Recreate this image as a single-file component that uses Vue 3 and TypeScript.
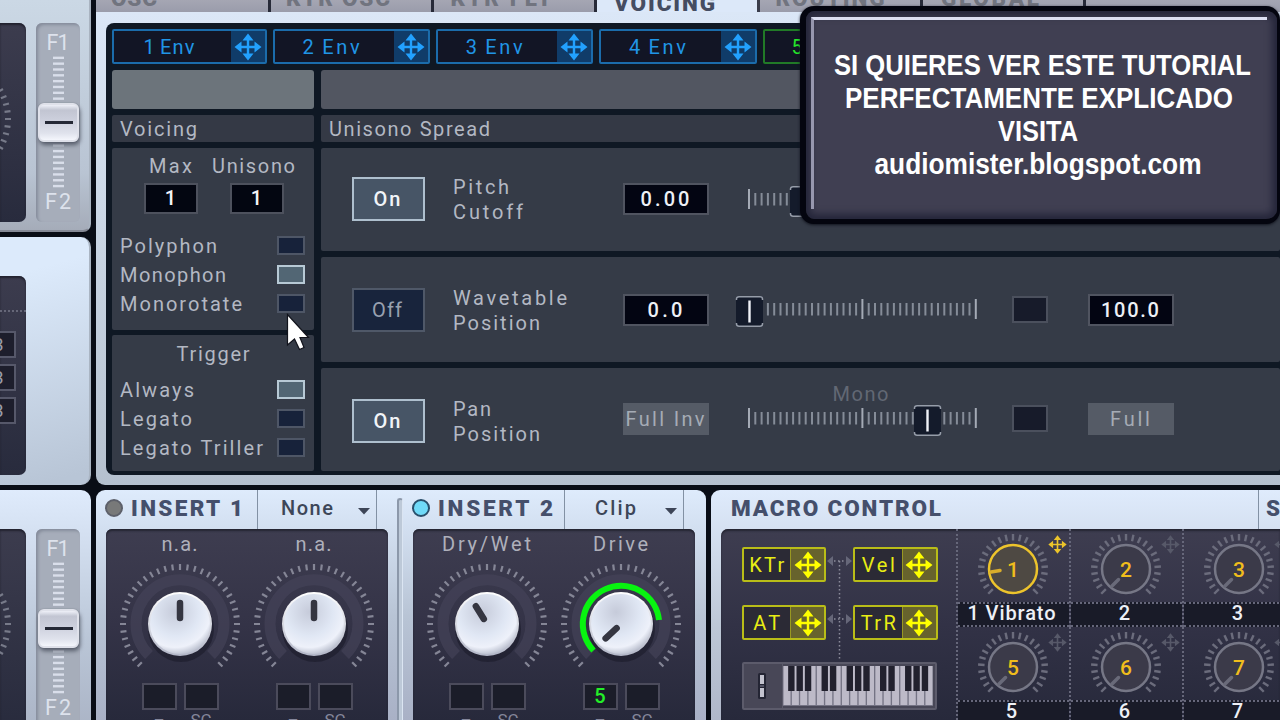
<script setup lang="ts">
type FitEl = HTMLElement

// Spaces the letters of a label so that it spans the given width in pixels.
const vFit = {
  mounted(el: FitEl, binding: { value: number }) {
    const count = (el.textContent ?? '').trim().length
    if (count < 2) return
    const spacing = (binding.value - el.getBoundingClientRect().width) / (count - 1)
    el.style.letterSpacing = `${spacing}px`
    el.style.marginRight = `${-spacing}px`
  },
}

interface Tick { x1: number; y1: number; x2: number; y2: number }

function ring(count: number, inner: number, outer: number): Tick[] {
  return Array.from({ length: count }, (_, i) => {
    const a = ((-135 + (270 * i) / (count - 1)) * Math.PI) / 180
    const s = Math.sin(a)
    const c = -Math.cos(a)
    return { x1: s * inner, y1: c * inner, x2: s * outer, y2: c * outer }
  })
}

const knobTicks = ring(37, 54, 60)
const macroTicks = ring(23, 28.5, 35)

const tabs = [
  { name: 'OSC', width: 46, cls: 'first' },
  { name: 'KTR OSC', width: 104, cls: '' },
  { name: 'KTR FLT', width: 101, cls: '' },
  { name: 'VOICING', width: 101, cls: 'active' },
  { name: 'ROUTING', width: 109, cls: 'late' },
  { name: 'GLOBAL', width: 98, cls: '' },
]

const envs = [
  { n: '1', w: 51, cls: 'first' },
  { n: '2', w: 57, cls: '' },
  { n: '3', w: 57, cls: '' },
  { n: '4', w: 57, cls: '' },
]

const modes = [
  { name: 'Polyphon', w: 97, on: false },
  { name: 'Monophon', w: 106, on: true },
  { name: 'Monorotate', w: 122, on: false },
]
const triggers = [
  { name: 'Always', w: 74, on: true },
  { name: 'Legato', w: 72, on: false },
  { name: 'Legato Triller', w: 143, on: false },
]

const rows = [
  { on: true, a: 'Pitch', aw: 56, b: 'Cutoff', bw: 70, value: '0.00', vw: 49, thumb: 54, muted: false, note: '', end: '', ew: 47 },
  { on: false, a: 'Wavetable', aw: 114, b: 'Position', bw: 87, value: '0.0', vw: 35, thumb: 0, muted: false, note: '', end: '100.0', ew: 58 },
  { on: true, a: 'Pan', aw: 38, b: 'Position', bw: 87, value: 'Full Inv', vw: 79, thumb: 178, muted: true, note: 'Mono', end: 'Full', ew: 40 },
]

const sliderTicks = Array.from({ length: 37 }, (_, i) => ({ x: 13 + i * 6.3, big: i % 18 === 0 }))

const inserts = [
  {
    title: 'INSERT 1', active: false, type: 'None', tw: 52,
    knobs: [
      { label: 'n.a.', w: 36, angle: 0, arc: false, slot: '' },
      { label: 'n.a.', w: 36, angle: 0, arc: false, slot: '' },
    ],
  },
  {
    title: 'INSERT 2', active: true, type: 'Clip', tw: 41,
    knobs: [
      { label: 'Dry/Wet', w: 89, angle: -32, arc: false, slot: '' },
      { label: 'Drive', w: 55, angle: -133, arc: true, slot: '5' },
    ],
  },
]

const sources = [
  [{ t: 'KTr', w: 35 }, { t: 'Vel', w: 33 }],
  [{ t: 'AT', w: 27 }, { t: 'TrR', w: 35 }],
]

const whiteKeys = Array.from({ length: 18 }, (_, i) => i * 8.35)
const blackKeys = [1, 2, 3, 5, 6, 8, 9, 10, 12, 13, 15, 16, 17].map((k) => k * 8.35 - 3.2)

const macros = [
  { n: '1', name: '1 Vibrato', on: true },
  { n: '2', name: '2', on: false },
  { n: '3', name: '3', on: false },
  { n: '5', name: '5', on: false },
  { n: '6', name: '6', on: false },
  { n: '7', name: '7', on: false },
]

const message = [
  { t: 'SI QUIERES VER ESTE TUTORIAL', w: 417, x: 228.5 },
  { t: 'PERFECTAMENTE EXPLICADO', w: 388, x: 225 },
  { t: 'VISITA', w: 80, x: 224 },
  { t: 'audiomister.blogspot.com', w: 327, x: 224 },
]
</script>

<template>
  <div class="synth">
    <svg class="defs" width="0" height="0">
      <defs>
        <symbol id="move" viewBox="0 0 28 28">
          <path d="M14 4V24M4 14H24" stroke="currentColor" stroke-width="2.4" />
          <path d="M14 0.5L19.5 7.5H8.5ZM14 27.5L19.5 20.5H8.5ZM0.5 14L7.5 8.5V19.5ZM27.5 14L20.5 8.5V19.5Z" fill="currentColor" />
        </symbol>
        <radialGradient id="cap" cx="0.42" cy="0.3" r="0.72">
          <stop offset="0" stop-color="#c6cbda" />
          <stop offset="0.55" stop-color="#e0e7f4" />
          <stop offset="0.82" stop-color="#eef1fa" />
          <stop offset="1" stop-color="#babfce" />
        </radialGradient>
        <linearGradient id="rim" x1="0" y1="0" x2="0" y2="1">
          <stop offset="0" stop-color="#ffffff" />
          <stop offset="1" stop-color="#b2b6c7" />
        </linearGradient>
      </defs>
    </svg>

    <div class="side">
      <section v-for="p in [0, 1, 2]" :key="p" class="side-panel" :class="'sp' + p">
        <div class="side-screen">
          <svg v-if="p !== 1" class="side-knob" width="26" height="130" viewBox="49 -65 26 130">
            <line v-for="(t, i) in knobTicks" :key="i" v-bind="t" stroke="#777a89" stroke-width="2.2" />
          </svg>
          <div v-else class="side-slots">
            <div v-for="n in 3" :key="n" class="side-slot"><span>3</span></div>
          </div>
        </div>
        <div v-if="p !== 1" class="fader">
          <span v-fit="23">F1</span>
          <svg width="44" height="138" viewBox="0 0 44 138">
            <path v-for="i in 23" :key="i" :d="`M17 ${i * 5.83 - 1}H28`" stroke="#d9deea" stroke-width="2.4" />
          </svg>
          <span v-fit="26">F2</span>
          <div class="fader-cap"><i></i></div>
        </div>
      </section>
    </div>

    <main class="body">
      <section class="voicing">
        <nav class="tabs">
          <div v-for="t in tabs" :key="t.name" class="tab" :class="t.cls">
            <span v-fit="t.width">{{ t.name }}</span>
          </div>
          <div class="tab rest"></div>
        </nav>
        <div class="screen">
          <div class="envs">
            <div v-for="e in envs" :key="e.n" class="env" :class="e.cls">
              <div class="env-name"><span v-fit="e.w">{{ e.n }} Env</span></div>
              <div class="env-move"><svg width="28" height="28"><use href="#move" /></svg></div>
            </div>
            <div class="env green"><span>5</span></div>
          </div>
          <div class="columns">
            <div class="left">
              <div class="band light"></div>
              <div class="caption"><span v-fit="77">Voicing</span></div>
              <div class="cell voices">
                <div class="nums">
                  <div class="num"><span v-fit="43">Max</span><b>1</b></div>
                  <div class="num"><span v-fit="83">Unisono</span><b>1</b></div>
                </div>
                <div v-for="m in modes" :key="m.name" class="option">
                  <span v-fit="m.w">{{ m.name }}</span><i :class="{ on: m.on }"></i>
                </div>
              </div>
              <div class="cell trigger">
                <div class="head"><span v-fit="73">Trigger</span></div>
                <div v-for="m in triggers" :key="m.name" class="option">
                  <span v-fit="m.w">{{ m.name }}</span><i :class="{ on: m.on }"></i>
                </div>
              </div>
            </div>
            <div class="right">
              <div class="band"></div>
              <div class="caption"><span v-fit="161">Unisono Spread</span></div>
              <div v-for="(r, i) in rows" :key="i" class="cell spread">
                <div class="toggle" :class="{ on: r.on }"><span v-fit="r.on ? 27 : 30">{{ r.on ? 'On' : 'Off' }}</span></div>
                <div class="names">
                  <div><span v-fit="r.aw">{{ r.a }}</span></div>
                  <div><span v-fit="r.bw">{{ r.b }}</span></div>
                </div>
                <div class="value" :class="{ muted: r.muted }"><span v-fit="r.vw">{{ r.value }}</span></div>
                <svg class="slider" width="256" height="58" viewBox="0 0 256 58">
                  <text v-if="r.note" x="124.500" y="11" text-anchor="middle" class="note" textLength="56">{{ r.note }}</text>
                  <path v-for="(t, k) in sliderTicks" :key="k" :d="t.big ? `M${t.x} 18V38` : `M${t.x} 22V34.500`"
                    :stroke="t.big ? '#a4aab5' : '#858c98'" stroke-width="2" />
                  <g :transform="`translate(${r.thumb} 15)`">
                    <rect x="0" y="0" width="27" height="31" rx="3" fill="#141b2b" />
                    <path d="M0.500 4V3Q0.500 0.800 3 0.800H24Q26.500 0.800 26.500 3V4M0.500 27V28Q0.500 30.200 3 30.200H24Q26.500 30.200 26.500 28V27" fill="none" stroke="#969da9" stroke-width="1.500" />
                    <path d="M13.500 4.500V26.500" stroke="#f0f2f8" stroke-width="2.400" />
                  </g>
                </svg>
                <template v-if="r.end">
                  <div class="slot"></div>
                  <div class="value" :class="{ muted: r.muted }"><span v-fit="r.ew">{{ r.end }}</span></div>
                </template>
              </div>
            </div>
          </div>
        </div>
      </section>

      <div class="lower">
        <section class="inserts">
          <template v-for="(ins, k) in inserts" :key="ins.title">
            <div v-if="k" class="groove"></div>
            <div class="insert">
              <header>
                <i class="lamp" :class="{ on: ins.active }"></i>
                <h2><span v-fit="k ? 115 : 112">{{ ins.title }}</span></h2>
                <div class="picker">
                  <span v-fit="ins.tw">{{ ins.type }}</span>
                  <svg width="12" height="8" viewBox="0 0 12 8"><path d="M0 1H12L6 7.500Z" fill="#3d4557" /></svg>
                </div>
              </header>
              <div class="knobs">
                <div v-for="(n, j) in ins.knobs" :key="j" class="knob">
                  <div class="knob-label"><span v-fit="n.w">{{ n.label }}</span></div>
                  <svg width="134" height="126" viewBox="-67 -63 134 126">
                    <path d="M-31 31A44 44 0 1 1 31 31" fill="none" stroke="#454459" stroke-opacity="0.65" stroke-width="11" />
                    <line v-for="(t, i) in knobTicks" :key="i" v-bind="t" stroke="#858696" stroke-width="2.200" />
                    <ellipse cx="1" cy="5" rx="33" ry="33" fill="#1b1b29" opacity="0.6" />
                    <path v-if="n.arc" d="M-27.500 26.500A38.200 38.200 0 1 1 38 -4" fill="none" stroke="#08f410" stroke-width="6" />
                    <circle r="32" fill="url(#rim)" />
                    <circle r="30" fill="url(#cap)" />
                    <path d="M0 -6V-21" :transform="`rotate(${n.angle})`" stroke="#353641" stroke-width="6.500" stroke-linecap="round" />
                  </svg>
                  <div class="slots"><div>{{ n.slot }}</div><div></div></div>
                  <div class="slot-names"><span>–</span><span>SC</span></div>
                </div>
              </div>
            </div>
          </template>
        </section>

        <section class="macro">
          <header>
            <h2><span v-fit="210">MACRO CONTROL</span></h2>
            <div class="next"><h2>S</h2></div>
          </header>
          <div class="macro-screen">
            <div class="sources">
              <div v-for="(pair, i) in sources" :key="i" class="pair">
                <template v-for="(s, j) in pair" :key="s.t">
                  <svg v-if="j" width="27" height="64" viewBox="0 0 27 64">
                    <path d="M1 14L7 9V19ZM26 14L20 9V19Z" fill="#666779" />
                    <path d="M8 14H20" stroke="#8c8c9b" stroke-width="1.500" stroke-dasharray="1.500 2.500" />
                    <path :d="i ? 'M13.500 0V56' : 'M13.500 14V58'" stroke="#8c8c9b" stroke-width="1.500" stroke-dasharray="1.500 2.500" />
                  </svg>
                  <div class="source">
                    <div><span v-fit="s.w">{{ s.t }}</span></div>
                    <div class="source-move"><svg width="28" height="28"><use href="#move" /></svg></div>
                  </div>
                </template>
              </div>
              <div class="keyboard">
                <div class="wheel"><svg width="8" height="26" viewBox="0 0 8 26"><rect x="0" y="0" width="8" height="26" rx="1.500" fill="#242534" /><path d="M2 2H6V11H2ZM2 15H6V24H2Z" fill="#c3c3cf" /><path d="M2 13H6" stroke="#85869a" /></svg></div>
                <svg width="150" height="40" viewBox="0 0 150 40">
                  <rect width="150" height="40" fill="#747384" />
                  <rect v-for="x in whiteKeys" :key="x" :x="x + 0.500" y="0" width="7" height="39" fill="#bdbac8" />
                  <rect v-for="x in blackKeys" :key="x" :x="x" y="0" width="6.400" height="25" fill="#22212e" />
                </svg>
              </div>
            </div>
            <div class="macros">
              <div v-for="m in macros" :key="m.n" class="mac" :class="{ on: m.on }">
                <svg width="111" height="73" viewBox="-55 -40 111 73">
                  <line v-for="(t, i) in macroTicks" :key="i" v-bind="t" stroke="#6b6c7c" stroke-width="2.400" />
                  <circle class="dial" r="24" />
                  <path class="hand" :d="m.on ? 'M-22 3L-13 1.500' : 'M-14 17L-7.500 10.500'" />
                  <use class="mv" href="#move" x="35" y="-34" width="19" height="19" />
                  <text class="macn" x="0" y="7.500" text-anchor="middle">{{ m.n }}</text>
                </svg>
                <div class="mac-name"><span v-fit="88">{{ m.name }}</span></div>
              </div>
            </div>
          </div>
        </section>
      </div>
    </main>

    <aside class="banner">
      <svg viewBox="0 0 453 189">
        <text v-for="(l, i) in message" :key="l.t" :x="l.x" :y="54.500 + i * 33.1" text-anchor="middle" :textLength="l.w"
          lengthAdjust="spacingAndGlyphs">{{ l.t }}</text>
      </svg>
    </aside>

    <svg class="cursor" width="26" height="40" viewBox="0 0 26 40">
      <path d="M1.500 1.500V32L8.500 26L13.500 36.500L18 34.500L14 24.500H22.500Z" fill="#fff" stroke="#11131c" stroke-width="1.200" />
    </svg>
  </div>
</template>

<style>
body { overflow: hidden; background: #090d16; }
</style>

<style scoped>
* { box-sizing: border-box; }
.synth {
  position: relative; width: 1280px; height: 720px; overflow: hidden; display: grid;
  grid-template-columns: 91px 1184px; column-gap: 5px; background: #090d16;
  font-family: Roboto, "Liberation Sans", sans-serif; font-size: 20px; color: #b3b8c3;
}
.defs { position: absolute; }
span { display: inline-block; white-space: nowrap; }
h2 { margin: 0; font-size: 22.500px; font-weight: 900; color: #454f6b; line-height: 24px; }

/* left strip */
.side { height: 720px; overflow: hidden; display: flex; flex-direction: column; gap: 5px; }
.side-panel { flex: none; display: flex; gap: 10px; border-radius: 0 10px 10px 0; background: linear-gradient(#cbd8e5, #b9c4d3 75%, #a5acb9); }
.sp0 { height: 232px; padding-top: 23px; border-radius: 0 0 8px 0; border-bottom: 2px solid #858995; border-right: 2px solid #a9b3c0; }
.sp1 { height: 248px; padding-top: 39px; background: linear-gradient(165deg, #dceafb 15%, #b8c5d6 95%); border-right: 2px solid #aab5c3; }
.sp2 { height: 248px; padding-top: 39px; background: linear-gradient(#dfebfc, #bac6d7 60%, #a9b2c4); }
.side-screen { width: 26px; height: 199px; background: linear-gradient(#3c3c4e, #282b3d); border-radius: 0 7px 7px 0; overflow: hidden; display: flex; align-items: center; box-shadow: inset 0 2px 2px #22222f; }
.sp2 .side-screen { align-items: flex-start; padding-top: 30px; }
.side-knob { margin-top: -8px; }
.sp2 .side-knob { margin-top: 0; }
.side-slots { align-self: stretch; width: 26px; padding-top: 34px; display: flex; flex-direction: column; gap: 6px; }
.side-slots::before { content: ""; border-top: 2px dotted #666778; height: 13px; }
.side-slot { width: 16px; height: 27px; border: 2px solid #56586a; border-left: 0; background: #1d1e2c; overflow: hidden; color: #9a9da9; font-size: 19px; line-height: 23px; }
.side-slot span { margin-left: -7px; }
.fader { position: relative; width: 44px; height: 199px; border-radius: 6px; background: #a6adba; box-shadow: inset 2px 2px 3px #868d9c; display: flex; flex-direction: column; align-items: center; color: #dde2ec; }
.fader > span { flex: none; font-size: 21.500px; line-height: 30px; height: 30px; padding-top: 5px; }
.fader > svg { flex: none; display: block; }
.fader > span:nth-of-type(2) { margin-top: -9px; }
.fader-cap { position: absolute; left: 2px; top: 80px; width: 41px; height: 39px; border-radius: 6px; background: linear-gradient(#eef0f8, #c2c5d2 15%, #cdd0dd 45%, #dfe2ec 80%, #f4f6fc); border: 2px solid #dfe1ea; box-shadow: 1px 3px 4px #565c6a, 0 0 1px #686e7b; display: grid; place-items: center; }
.fader-cap i { width: 28px; height: 3px; background: #252936; }

/* main area */
.body { display: flex; flex-direction: column; gap: 5px; width: 1184px; height: 720px; }
.voicing { height: 485px; background: linear-gradient(#dce8f8, #b9c5d3 90%, #b4c0cf); border-radius: 0 0 0 9px; }
.tabs { display: flex; height: 12px; background: #dde9f9; }
.tab { flex: none; width: 163px; height: 12px; overflow: hidden; background: linear-gradient(#a5a6b3, #9a9cab); border-right: 3px solid #272a38; display: flex; align-items: flex-end; justify-content: center; font-size: 22.500px; font-weight: 900; line-height: 16px; color: #71747f; padding: 0 26px 6px 0; }
.tab.first { width: 175px; justify-content: flex-start; padding-left: 15px; }
.tab.late { padding-right: 20px; }
.tab.active { background: #dce8f9; color: #454d62; padding: 0 25px 1px 0; border-right-color: #3a3d4b; }
.tab.rest { flex: 1; border-right: 0; }
.screen { margin: 11px 0 0 10px; height: 452px; padding: 6px 0 0 6px; background: #0f1824; border-radius: 8px 0 0 8px; overflow: hidden; }
.envs { display: flex; gap: 6px; height: 35px; }
.env { flex: none; width: 157.200px; height: 35px; border: 2px solid #1b6cab; border-radius: 2px; background: #121525; color: #2095e6; display: flex; align-items: stretch; word-spacing: -2px; }
.env.first { width: 155px; }
.env-name { flex: 1; display: grid; place-items: center; padding-right: 7px; }
.env-move { width: 34px; background: #103c69; color: #22a1ff; display: grid; place-items: center; }
.env-move svg { display: block; }
.env.green { border-color: #217a27; color: #25e52a; padding-left: 27px; align-items: center; }
.columns { display: flex; gap: 7px; margin-top: 6px; }
.left { width: 202px; }
.right { flex: 1; }
.band { height: 39px; border-radius: 3px; background: #525661; }
.band.light { background: #6c747b; }
.caption { height: 27px; margin: 6px 0; padding-left: 8px; border-radius: 2px; background: #343945; display: flex; align-items: center; }
.cell { background: #353b47; border-radius: 2px; }
.voices { height: 182px; padding-top: 5px; }
.nums { display: grid; grid-template-columns: 54px 82px; gap: 17px; padding-left: 31.500px; margin-bottom: 17px; }
.num { display: flex; flex-direction: column; align-items: center; line-height: 27px; }
.num:last-child { margin-left: -2px; margin-right: 2px; }
.num b { width: 54px; height: 31px; margin-top: 3px; border: 2px solid #4d515d; background: #030611; color: #f3f4f8; font-weight: 500; display: grid; place-items: center; }
.num:last-child b { margin-right: -6px; }
.option { height: 29px; padding: 0 9px 0 8px; display: flex; align-items: center; justify-content: space-between; }
.option i { width: 28px; height: 19px; border: 2px solid #4e5666; background: #17223a; }
.option i.on { background: #526674; border-color: #b7c9d5; }
.trigger { height: 136px; margin-top: 5px; padding-top: 5px; }
.head { height: 27px; display: flex; align-items: center; justify-content: center; margin-bottom: 8px; }
.spread { height: 103px; margin-bottom: 6px; padding-left: 31px; display: flex; align-items: flex-start; }
.spread:nth-child(4) { height: 105px; }
.toggle { flex: none; width: 73px; height: 44px; margin-top: 29px; border: 2px solid #4f5868; background: #18243c; display: grid; place-items: center; color: #98a1b0; padding-right: 3px; }
.spread:nth-child(4) .toggle, .spread:nth-child(5) .toggle { margin-top: 31px; }
.toggle.on { background: #475566; border-color: #aebfce; color: #f1f4f8; font-weight: 500; }
.names { flex: none; width: 198px; padding-left: 28px; margin-top: 27px; line-height: 24.500px; }
.spread:nth-child(4) .names, .spread:nth-child(5) .names { margin-top: 29px; }
.value { flex: none; width: 86px; height: 32px; margin-top: 35px; border: 2px solid #505460; background: #030512; color: #edf0f6; font-weight: 500; display: grid; place-items: center; padding-right: 2px; }
.spread:nth-child(4) .value { margin-top: 37px; }
.spread:nth-child(5) .value { margin-top: 35px; }
.value.muted { background: #555b66; border-color: #555b66; color: #a5abb5; font-weight: 400; }
.slider { flex: none; display: block; margin: 23px 0 0 27px; overflow: visible; }
.spread:nth-child(4) .slider { margin-top: 24px; }
.spread:nth-child(5) .slider { margin-top: 22px; }
.note { fill: #626874; font-size: 20px; }
.slot { flex: none; width: 36px; height: 27px; margin: 39px 40px 0 20px; border: 2px solid #4b505d; background: #171b2a; }
.spread:nth-child(5) .slot { margin-top: 37px; }

/* lower row */
.lower { display: flex; gap: 5px; height: 230px; }
.inserts { flex: none; width: 610px; background: linear-gradient(#deebfc, #b8c4d5 55%, #a9b1c6); border-radius: 9px 9px 0 0; padding-left: 10px; display: flex; }
.insert { flex: none; width: 282px; }
.insert header { height: 39px; display: flex; align-items: center; }
.lamp { width: 18px; height: 18px; border-radius: 50%; border: 2px solid #5d606a; background: #787979; margin: -3px 6px 0 -1px; }
.lamp.on { background: #70daf8; border-color: #294f6b; }
.insert h2 { width: 128px; padding-left: 2px; margin-top: -4px; }
.picker { width: 120px; height: 39px; border-left: 1.500px solid #8291a4; border-right: 1.500px solid #8291a4; display: flex; align-items: center; justify-content: space-between; padding: 0 6px 3px 23px; color: #3d4658; font-weight: 500; }
.groove + .insert .picker { padding-left: 30px; }
.picker svg { margin-top: 5px; }
.groove { flex: none; width: 6px; height: 230px; margin: 8px 10px 0 9px; border: 2px solid #8c98aa; border-right: 1px solid #dbe5f2; border-radius: 3px; background: #bdc9d8; }
.knobs { height: 191px; border-radius: 6px 6px 0 0; background: linear-gradient(#3e3d50, #343347 50%, #27293b); display: grid; grid-template-columns: 134px 134px; padding-left: 7px; overflow: hidden; box-shadow: inset 0 2px 2px #242532; }
.knob svg { display: block; }
.knob-label { height: 32px; padding: 0 1px 2px 0; display: grid; place-items: center; color: #aeb0bb; }
.slots { display: flex; justify-content: center; gap: 7px; margin-top: -4px; position: relative; }
.slots div { width: 35px; height: 27px; border: 2px solid #4b4b5b; background: #1b1d29; color: #23ef28; line-height: 23px; text-align: center; font-weight: 500; }
.slot-names { display: flex; justify-content: center; gap: 7px; line-height: 20px; font-size: 17px; color: #84869a; }
.slot-names span { width: 35px; text-align: center; }

.macro { flex: none; width: 569px; background: linear-gradient(#dfebfc, #bdc7d6 60%, #b0b7c9); border-radius: 9px 0 0 0; padding-left: 10px; }
.macro header { display: flex; justify-content: space-between; height: 39px; }
.macro header > h2 { padding: 6px 0 0 10px; }
.next { width: 22px; border-left: 1.500px solid #8291a4; padding: 6px 0 0 7px; overflow: hidden; }
.macro-screen { height: 191px; display: flex; background: linear-gradient(#3e3d50, #323246 50%, #27293b); border-radius: 7px 0 0 0; box-shadow: inset 0 2px 2px #242532; }
.sources { flex: none; width: 235px; padding: 18px 0 0 20.500px; }
.pair { display: flex; height: 58px; }
.pair > svg { overflow: visible; display: block; }
.source { width: 84.500px; height: 35px; border: 2px solid #b9bd18; border-radius: 2px; display: flex; background: #2b2a35; color: #e8ed14; }
.source div { flex: 1; display: grid; place-items: center; }
.source .source-move { flex: none; width: 34px; background: #67632d; border-left: 1px solid #999821; color: #ffff00; }
.keyboard { width: 195px; height: 48px; margin-top: -1px; position: relative; border: 2px solid #5c5b6b; background: #484757; border-radius: 2px; display: flex; align-items: center; }
.wheel { width: 39px; height: 44px; border-right: 1px solid #5b5a6a; padding-right: 2px; display: grid; place-items: center; }
.macros { flex: 1; display: grid; grid-template-columns: repeat(3, 113px); grid-auto-rows: 98px; overflow: hidden; border-left: 2px dotted #66677a; }
.mac { border-right: 2px dotted #66677a; display: flex; flex-direction: column; }
.mac svg { display: block; color: #575969; flex: none; }
.mac-name { height: 25px; background: #191b28; color: #edf0f6; border-top: 2px dotted #66677a; border-bottom: 2px dotted #66677a; display: flex; justify-content: center; line-height: 18px; font-weight: 500; padding-right: 4px; }
.dial { fill: #3b3a49; stroke: #767786; stroke-width: 2.500; }
.hand { stroke: #696a79; stroke-width: 3.500; stroke-linecap: round; }
.macn { fill: #f0bd1c; font-size: 21px; font-weight: 500; }
.on .dial { stroke: #edc42c; fill: #4e4943; }
.on .hand { stroke: #d9ad2b; }
.on .mv { color: #ebc42b; }

.banner { position: absolute; left: 800px; top: 6px; width: 480px; height: 218px; border: 5px solid #04050f; border-left-width: 6px; border-right-width: 3px; border-radius: 14px; background: #403f52; box-shadow: inset 0 0 7px 5px #25263a, 0 1px 3px #10131d; padding: 6px 0 0 5px; }
.banner svg { display: block; width: 456px; height: 192px; border-top: 3px solid #dcdff2; border-left: 3px solid #9797ae; overflow: visible; }
.banner text { font-family: "Liberation Sans", Arial, sans-serif; font-size: 29px; font-weight: 700; fill: #fff; }
.cursor { position: absolute; left: 286px; top: 313px; }
</style>
